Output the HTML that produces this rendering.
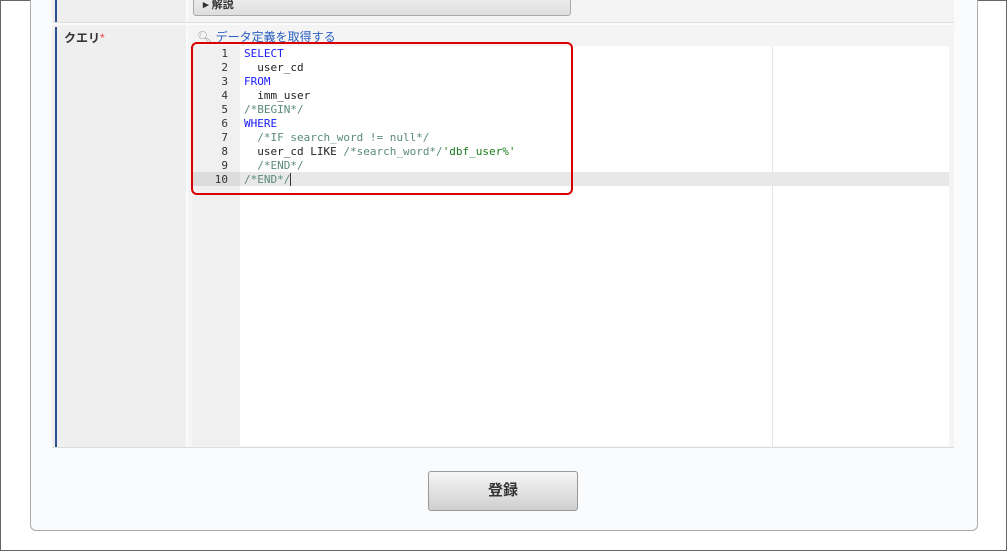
<!DOCTYPE html>
<html><head><meta charset="utf-8"><style>
*{margin:0;padding:0;box-sizing:border-box}
body{width:1007px;height:551px;background:#fff;position:relative;overflow:hidden;font-family:"Liberation Sans","Noto Sans CJK JP",sans-serif}
.a{position:absolute}
.code{font-family:"DejaVu Sans Mono","Liberation Mono",monospace;font-size:11px;line-height:14px;white-space:pre}
.kw{color:#1a1aff}.cm{color:#5a8a7a}.st{color:#1a7a1a}.tx{color:#222}
</style></head><body>
<div class="a" style="left:0;top:0;width:1007px;height:551px;border:1px solid #666;border-bottom:1px solid #666"></div>
<div class="a" style="left:30px;top:-10px;width:948px;height:541px;border:1px solid #aaa;border-radius:6px;background:#fafbfd"></div>
<div class="a" style="left:52px;top:0;width:134px;height:22px;background:#efefef"></div>
<div class="a" style="left:55px;top:0;width:2px;height:22px;background:#2d4f95"></div>
<div class="a" style="left:188px;top:0;width:766px;height:22px;background:#f4f4f4"></div>
<div class="a" style="left:193px;top:-10px;width:378px;height:26px;border:1px solid #aaa;border-radius:3px;background:linear-gradient(#f4f4f4,#dedede)"></div>
<div class="a" style="left:203px;top:-4px;font-size:11px;color:#333;font-weight:bold">▸ 解説</div>
<div class="a" style="left:52px;top:22px;width:902px;height:1px;background:#ddd"></div>
<div class="a" style="left:52px;top:25px;width:134px;height:422px;background:#efefef"></div>
<div class="a" style="left:55px;top:27px;width:2px;height:420px;background:#2d4f95"></div>
<div class="a" style="left:188px;top:25px;width:766px;height:422px;background:#f4f4f4"></div>
<div class="a" style="left:52px;top:447px;width:902px;height:1px;background:#ddd"></div>
<div class="a" style="left:64px;top:29px;font-size:12px;font-weight:bold;color:#333">クエリ<span style="color:#e44;font-weight:normal">*</span></div>
<div class="a" style="left:197px;top:28px;font-size:12px;color:#2a5fc4"><span style="color:#999">🔍︎</span> データ定義を取得する</div>
<div class="a" style="left:192px;top:46px;width:48px;height:400px;background:#f0f0f0"></div>
<div class="a" style="left:240px;top:46px;width:709px;height:400px;background:#fff"></div>
<div class="a" style="left:772px;top:46px;width:1px;height:400px;background:#e4e4e4"></div>
<div class="a" style="left:192px;top:172px;width:757px;height:14px;background:#e8e8e8"></div>
<div class="a" style="left:192px;top:172px;width:48px;height:14px;background:#dcdcdc"></div>
<div class="a code" style="left:192px;top:47px;width:36px;text-align:right;color:#333">1
2
3
4
5
6
7
8
9
10</div>
<div class="a code" style="left:244px;top:47px"><span class="kw">SELECT</span>
<span class="tx">  user_cd</span>
<span class="kw">FROM</span>
<span class="tx">  imm_user</span>
<span class="cm">/*BEGIN*/</span>
<span class="kw">WHERE</span>
<span class="cm">  /*IF search_word != null*/</span>
<span class="tx">  user_cd LIKE </span><span class="cm">/*search_word*/</span><span class="st">'dbf_user%'</span>
<span class="cm">  /*END*/</span>
<span class="cm">/*END*/</span><span style="border-left:1px solid #333"></span></div>
<div class="a" style="left:191px;top:42px;width:382px;height:153px;border:2px solid #d80000;border-radius:6px"></div>
<div class="a" style="left:428px;top:471px;width:150px;height:40px;border:1px solid #999;border-radius:3px;background:linear-gradient(#f6f6f6,#cfcfcf);text-align:center;line-height:38px;font-size:15px;font-weight:bold;color:#333">登録</div>
</body></html>
